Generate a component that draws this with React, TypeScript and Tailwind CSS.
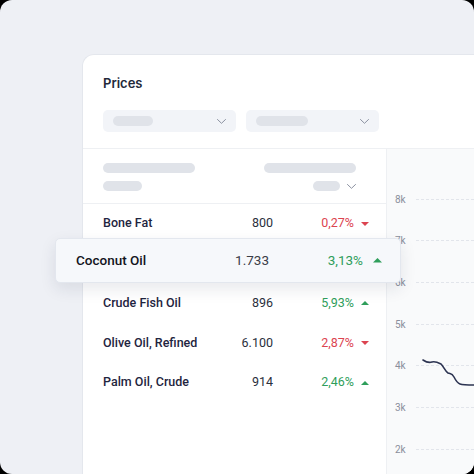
import React from 'react';

interface Row {
  name: string;
  value: string;
  change: string;
  up: boolean;
}

const rows: (Row | null)[] = [
  { name: 'Bone Fat', value: '800', change: '0,27%', up: false },
  null,
  { name: 'Crude Fish Oil', value: '896', change: '5,93%', up: true },
  { name: 'Olive Oil, Refined', value: '6.100', change: '2,87%', up: false },
  { name: 'Palm Oil, Crude', value: '914', change: '2,46%', up: true },
];

const ticks = ['8k', '7k', '6k', '5k', '4k', '3k', '2k'];

function Chevron({ className = '' }: { className?: string }) {
  return (
    <svg width="9" height="5" viewBox="0 0 9 5" className={className} fill="none">
      <path d="M0.5 0.5 L4.5 4.3 L8.5 0.5" stroke="#8b91a0" strokeWidth="1" strokeLinecap="round" strokeLinejoin="round" />
    </svg>
  );
}

function Triangle({ up, size = 8 }: { up: boolean; size?: number }) {
  return (
    <svg width={size} height={size / 2} viewBox="0 0 8 4">
      {up ? <path d="M0 4 L4 0 L8 4 Z" fill="#2f9e5b" /> : <path d="M0 0 L8 0 L4 4 Z" fill="#dc4450" />}
    </svg>
  );
}

function Pill({ className }: { className: string }) {
  return <div className={`h-[10px] rounded-full bg-[#e0e3e9] ${className}`} />;
}

export default function App() {
  return (
    <div className="w-[474px] h-[474px] bg-black">
      <div
        className="relative h-full rounded-[12px] bg-[#eef0f5] pl-[82px] pt-[54px] overflow-hidden"
        style={{ fontFamily: 'Roboto, "Noto Sans", sans-serif' }}
      >
        {/* Card */}
        <div className="h-full bg-white rounded-tl-[12px] border-l border-t border-[#e4e7ed] flex flex-col">
          <div className="px-5 pt-[20px] pb-[16px] border-b border-[#eef0f3]">
            <div
              className="text-[13px] leading-4 font-semibold text-[#232839]"
              style={{ fontFamily: 'Inter, "Noto Sans", sans-serif' }}
            >
              Prices
            </div>
            <div className="flex gap-[10px] mt-[19px]">
              <div className="w-[133px] h-[22px] rounded-[5px] bg-[#f2f4f8] flex items-center justify-between pl-[10px] pr-[10px]">
                <Pill className="w-[40px]" />
                <Chevron />
              </div>
              <div className="w-[133px] h-[22px] rounded-[5px] bg-[#f2f4f8] flex items-center justify-between pl-[10px] pr-[10px]">
                <Pill className="w-[52px]" />
                <Chevron />
              </div>
            </div>
          </div>

          <div className="flex flex-1">
            {/* Table */}
            <div className="w-[303px] flex flex-col">
              <div className="h-[55px] border-b border-[#eef0f3] pl-5 pr-[30px] pt-[14px] flex flex-col gap-2">
                <div className="flex justify-between">
                  <Pill className="w-[92px]" />
                  <Pill className="w-[92px]" />
                </div>
                <div className="flex justify-between items-center">
                  <Pill className="w-[39px]" />
                  <div className="flex items-center gap-[7px]">
                    <Pill className="w-[27px]" />
                    <Chevron />
                  </div>
                </div>
              </div>
              {rows.map((r, i) =>
                r ? (
                  <div key={i} className="h-[39.7px] flex items-center pl-5 pr-[17px] text-[12.5px]">
                    <div className="flex-1 font-medium text-[#1f2540]">{r.name}</div>
                    <div className="text-[#2b2f3d] text-right">{r.value}</div>
                    <div className="w-[96px] flex items-center justify-end gap-[7px]">
                      <span className={r.up ? 'text-[#2f9e5b]' : 'text-[#dc4450]'}>{r.change}</span>
                      <Triangle up={r.up} />
                    </div>
                  </div>
                ) : (
                  <div key={i} className="h-[39.7px]" />
                )
              )}
            </div>

            {/* Chart */}
            <div className="flex-1 bg-[#f9fafb] border-l border-[#eef0f3] pt-[44px] relative">
              <div className="flex flex-col gap-[29.7px]">
                {ticks.map((t) => (
                  <div key={t} className="h-[12px] flex items-center">
                    <span className="w-[29px] pl-[8px] text-[10px] text-[#8a8f9c]">{t}</span>
                    <div className="flex-1 border-t border-dashed border-[#e2e5eb]" />
                  </div>
                ))}
              </div>
              <svg className="absolute left-0 top-0" width="88" height="330" viewBox="0 0 88 330" fill="none">
                <path
                  d="M36 211 C39 213 42 214 45 213 C48 212 50 213 54 215 C57 218 58 222 61 224 C64 225 65 224 67 228 C69 232 70 234 73 235 C76 236 80 236 88 236"
                  stroke="#2d3452"
                  strokeWidth="1.6"
                  strokeLinecap="round"
                />
              </svg>
            </div>
          </div>
        </div>

        {/* Floating highlighted row */}
        <div className="absolute left-[55px] top-[238px] w-[346px] h-[45px] rounded-[5px] bg-[#f6f8fb] border border-[#e3e7ee] shadow-[0_6px_16px_rgba(30,40,70,0.10)] flex items-center pl-5 pr-[18px] text-[13.5px]">
          <div className="flex-1 font-medium text-[#121420]">Coconut Oil</div>
          <div className="text-[#3a3d47]">1.733</div>
          <div className="w-[113px] flex items-center justify-end gap-[10px]">
            <span className="text-[#2f9e5b]">3,13%</span>
            <Triangle up size={9} />
          </div>
        </div>
      </div>
    </div>
  );
}
